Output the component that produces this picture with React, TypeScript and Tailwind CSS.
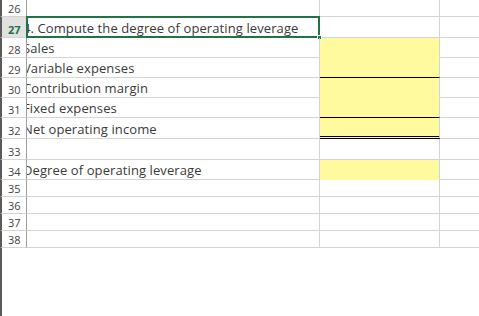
import React from "react";

type Row = {
  n: number;
  h: string;
  label?: string;
  fill?: boolean;
  under?: "single" | "double";
  active?: boolean;
};

const rows: Row[] = [
  { n: 26, h: "h-[17px]" },
  { n: 27, h: "h-[21px]", label: "4. Compute the degree of operating leverage", active: true },
  { n: 28, h: "h-[20px]", label: "Sales", fill: true },
  { n: 29, h: "h-[20px]", label: "Variable expenses", fill: true, under: "single" },
  { n: 30, h: "h-[20px]", label: "Contribution margin", fill: true },
  { n: 31, h: "h-[20px]", label: "Fixed expenses", fill: true, under: "single" },
  { n: 32, h: "h-[21px]", label: "Net operating income", fill: true, under: "double" },
  { n: 33, h: "h-[21px]" },
  { n: 34, h: "h-[20px]", label: "Degree of operating leverage", fill: true },
  { n: 35, h: "h-[17px]" },
  { n: 36, h: "h-[17px]" },
  { n: 37, h: "h-[17px]" },
  { n: 38, h: "h-[17px]" },
];

function SheetRow({ row }: { row: Row }) {
  let cBorder = "border-b border-r border-[#d4d4d4]";
  if (row.fill) cBorder = "border-b border-r border-b-[#fffa9e] border-r-[#d4d4d4]";
  if (row.under === "single") cBorder = "border-b border-r border-b-black border-r-[#d4d4d4]";
  if (row.under === "double") cBorder = "border-b-[3px] border-double border-r border-b-black border-r-[#d4d4d4]";

  return (
    <div className={`flex ${row.h}`}>
      <div
        className={`w-[27px] shrink-0 border-l-2 border-l-[#5a5a5a] border-r border-r-[#9e9e9e] border-b border-b-[#d4d4d4] flex items-end pl-[6px] pb-[2px] text-[11px] leading-none ${
          row.active ? "bg-[#e1e1e1] text-[#217346] font-bold" : "bg-white text-[#444]"
        }`}
      >
        {row.n}
      </div>
      <div className="relative w-[293px] shrink-0 border-b border-r border-[#d4d4d4]">
        <div className="h-full overflow-hidden flex items-end pb-[2px]">
          {row.label && (
            <span className="ml-[-4px] whitespace-nowrap text-[13px] leading-none text-[#3a3a3a] tracking-[0.1px]">
              {row.label}
            </span>
          )}
        </div>
        {row.active && (
          <>
            <div className="absolute -left-[1px] -top-[1px] -right-[1px] -bottom-[1px] border-2 border-[#217346]" />
            <div className="absolute -right-[3px] -bottom-[3px] w-[5px] h-[5px] bg-[#217346] border border-white" />
          </>
        )}
      </div>
      <div className={`w-[120px] shrink-0 ${row.fill ? "bg-[#fffa9e]" : ""} ${cBorder}`} />
      <div className="flex-1 border-b border-[#d4d4d4]" />
    </div>
  );
}

export default function App() {
  return (
    <div
      className="w-[479px] h-[316px] bg-white flex flex-col overflow-hidden"
      style={{ fontFamily: "'Open Sans', 'Liberation Sans', Arial, sans-serif" }}
    >
      {rows.map((r) => (
        <SheetRow key={r.n} row={r} />
      ))}
      <div className="flex-1 border-l-2 border-l-[#5a5a5a]" />
    </div>
  );
}
